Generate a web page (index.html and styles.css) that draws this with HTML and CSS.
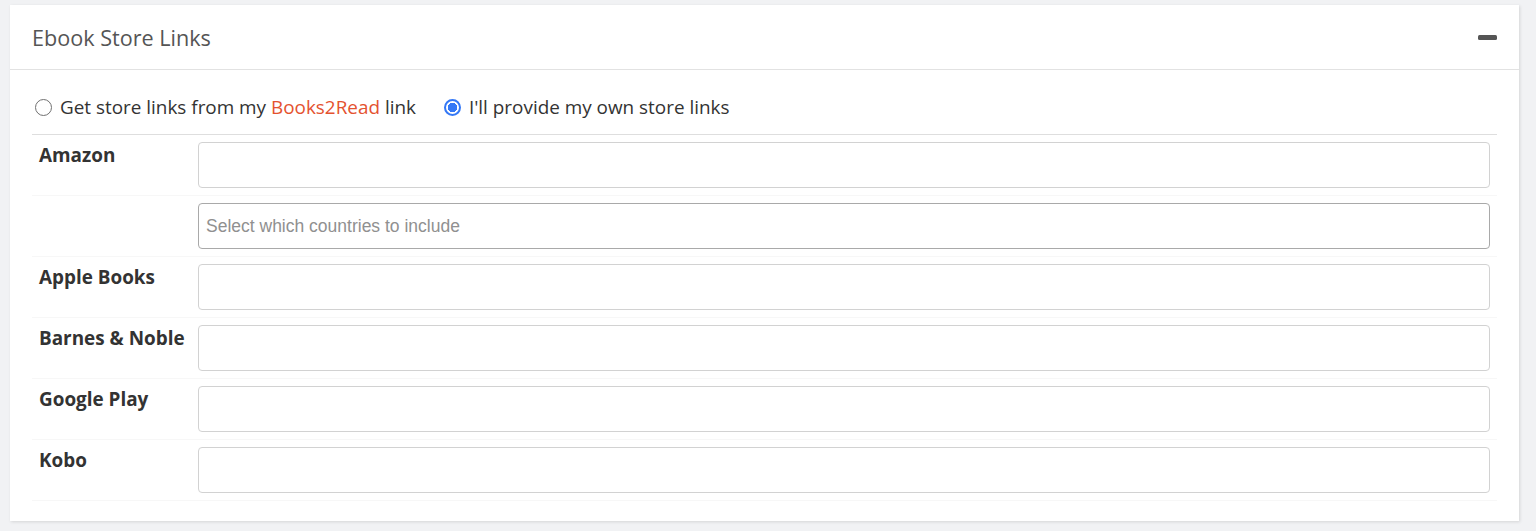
FILE: index.html
```html
<!DOCTYPE html>
<html lang="en">
<head>
<meta charset="utf-8">
<title>Ebook Store Links</title>
<link rel="stylesheet" href="styles.css">
</head>
<body>
<div class="page">
  <section class="card">
    <header class="card-head">
      <h2 class="card-title">Ebook Store Links</h2>
      <button class="collapse" aria-label="Collapse"><span class="minus"></span></button>
    </header>
    <div class="card-body">
      <div class="source">
        <label class="choice"><input type="radio" name="src" class="radio">Get store links from my <span class="brand">Books2Read</span> link</label>
        <label class="choice"><input type="radio" name="src" class="radio" checked>I'll provide my own store links</label>
      </div>
      <div class="stores">
        <div class="store-row">
          <div class="store-label">Amazon</div>
          <input class="field" type="text">
        </div>
        <div class="store-row">
          <div class="store-label"></div>
          <div class="field select-field">Select which countries to include</div>
        </div>
        <div class="store-row">
          <div class="store-label">Apple Books</div>
          <input class="field" type="text">
        </div>
        <div class="store-row">
          <div class="store-label">Barnes &amp; Noble</div>
          <input class="field" type="text">
        </div>
        <div class="store-row">
          <div class="store-label">Google Play</div>
          <input class="field" type="text">
        </div>
        <div class="store-row">
          <div class="store-label">Kobo</div>
          <input class="field" type="text">
        </div>
      </div>
    </div>
  </section>
</div>
</body>
</html>
```

FILE: styles.css
```css
* { box-sizing: border-box; }
html, body { margin: 0; padding: 0; }
body {
  background: #f1f2f4;
  font-family: "Open Sans", "Noto Sans", sans-serif;
  color: #333;
}
.page {
  padding: 5px 17px 10px 10px;
}
.card {
  background: #fff;
  box-shadow: 1px 1px 3px rgba(0,0,0,0.12);
  height: 516px;
}
.card-head {
  height: 65px;
  border-bottom: 1px solid #e2e2e2;
  display: flex;
  align-items: center;
  justify-content: space-between;
  padding: 0 22px;
}
.card-title {
  margin: 0;
  font-size: 21.6px;
  font-weight: 400;
  color: #555;
  line-height: 1;
  padding-top: 2px;
}
.collapse {
  border: 0;
  background: none;
  padding: 0;
  display: flex;
  align-items: center;
  cursor: pointer;
}
.minus {
  display: block;
  width: 19px;
  height: 5px;
  border-radius: 1.5px;
  background: #555;
}
.card-body {
  padding: 0 22px;
}
.source {
  display: flex;
  align-items: center;
  gap: 28px;
  height: 65px;
  padding: 10px 0 0 3px;
  border-bottom: 1px solid #dedede;
  font-size: 18.9px;
  color: #333;
}
.choice {
  display: flex;
  align-items: center;
  white-space: pre;
}
.brand { color: #e4522f; }
.radio {
  appearance: none;
  -webkit-appearance: none;
  margin: 0 8px 0 0;
  width: 17px;
  height: 17px;
  border-radius: 50%;
  border: 1px solid #707070;
  background: #fff;
}
.radio:checked {
  border: 2px solid #3478f6;
  background: radial-gradient(circle, #3478f6 0 4.5px, #fff 5px);
}
.store-row {
  display: grid;
  grid-template-columns: 166px 1fr;
  padding: 7px 7px 7px 0;
  border-bottom: 1px solid #f7f7f7;
}
.store-label {
  padding-left: 7px;
  font-size: 18.9px;
  font-weight: 700;
  line-height: 27px;
  color: #333;
}
.field {
  display: block;
  width: 100%;
  height: 46px;
  margin: 0;
  border: 1px solid #d2d2d2;
  border-radius: 4px;
  background: #fff;
  font: inherit;
  padding: 0 8px;
}
.select-field {
  border-color: #a9a9a9;
  font-family: "Liberation Sans", Arial, sans-serif;
  font-size: 17.5px;
  color: #909090;
  display: flex;
  align-items: center;
  padding-left: 7px;
}
```
